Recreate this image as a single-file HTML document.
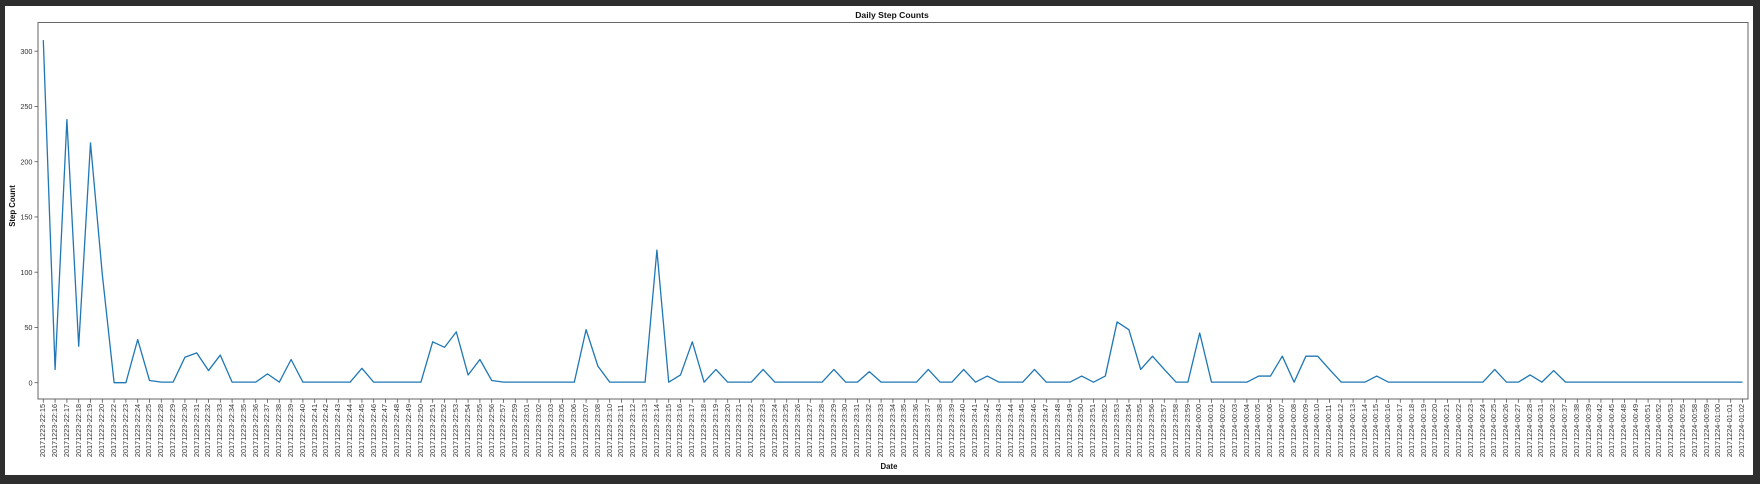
<!DOCTYPE html>
<html><head><meta charset="utf-8"><style>
html,body{margin:0;padding:0;background:#2e2e2e;width:1760px;height:484px;overflow:hidden}
#fig{position:absolute;left:5px;top:6px;width:1748px;height:469px;background:#fff}
svg{position:absolute;left:0;top:0}
#xl{position:absolute;left:37.4px;top:404px;display:flex;font:7.3px "Liberation Sans",sans-serif;color:#333}
#xl span{width:11.8px;display:flex;justify-content:center}
#xl span i{font-style:normal;writing-mode:vertical-rl;transform:rotate(180deg);white-space:nowrap;line-height:8px}
</style></head><body>
<div id="fig"></div>
<svg width="1760" height="484" xmlns="http://www.w3.org/2000/svg" font-family="Liberation Sans, sans-serif">
<rect x="38" y="22.5" width="1710" height="376.5" fill="none" stroke="#666" stroke-width="1"/>
<text x="892" y="18" font-size="8.6" font-weight="bold" text-anchor="middle" fill="#111">Daily Step Counts</text>
<text x="889" y="469" font-size="7.8" font-weight="bold" text-anchor="middle" fill="#111">Date</text>
<text transform="translate(15,206) rotate(-90)" font-size="7.8" font-weight="bold" text-anchor="middle" fill="#111">Step Count</text>
<g stroke="#555" stroke-width="0.8">
<line x1="34.5" x2="38" y1="382.7" y2="382.7"/><line x1="34.5" x2="38" y1="327.45" y2="327.45"/><line x1="34.5" x2="38" y1="272.2" y2="272.2"/><line x1="34.5" x2="38" y1="216.95" y2="216.95"/><line x1="34.5" x2="38" y1="161.7" y2="161.7"/><line x1="34.5" x2="38" y1="106.45" y2="106.45"/><line x1="34.5" x2="38" y1="51.2" y2="51.2"/>
</g>
<line x1="42.9" x2="1745" y1="401" y2="401" stroke="#555" stroke-width="3.5" stroke-dasharray="0.8 11"/>
<g font-size="7.3" fill="#333" text-anchor="end">
<text x="32.5" y="385.3">0</text><text x="32.5" y="330">50</text><text x="32.5" y="274.8">100</text><text x="32.5" y="219.5">150</text><text x="32.5" y="164.3">200</text><text x="32.5" y="109">250</text><text x="32.5" y="53.8">300</text>
</g>
<polyline transform="translate(43.3,382.7) scale(11.8,-1.105)" vector-effect="non-scaling-stroke" fill="none" stroke="#1f77b4" stroke-width="1.3" stroke-linejoin="round"
points="0,310 1,12 2,238 3,33 4,217 5,98 6,0 7,0 8,39 9,2 10,0.5 11,0.5 12,23 13,27 14,11 15,25 16,0.5 17,0.5 18,0.5 19,8 20,0.5 21,21 22,0.5 23,0.5 24,0.5 25,0.5 26,0.5 27,13 28,0.5 29,0.5 30,0.5 31,0.5 32,0.5 33,37 34,32 35,46 36,7 37,21 38,2 39,0.5 40,0.5 41,0.5 42,0.5 43,0.5 44,0.5 45,0.5 46,48 47,15 48,0.5 49,0.5 50,0.5 51,0.5 52,120 53,0.5 54,7 55,37 56,0.5 57,12 58,0.5 59,0.5 60,0.5 61,12 62,0.5 63,0.5 64,0.5 65,0.5 66,0.5 67,12 68,0.5 69,0.5 70,10 71,0.5 72,0.5 73,0.5 74,0.5 75,12 76,0.5 77,0.5 78,12 79,0.5 80,6 81,0.5 82,0.5 83,0.5 84,12 85,0.5 86,0.5 87,0.5 88,6 89,0.5 90,6 91,55 92,48 93,12 94,24 95,12 96,0.5 97,0.5 98,45 99,0.5 100,0.5 101,0.5 102,0.5 103,6 104,6 105,24 106,0.5 107,24 108,24 109,12 110,0.5 111,0.5 112,0.5 113,6 114,0.5 115,0.5 116,0.5 117,0.5 118,0.5 119,0.5 120,0.5 121,0.5 122,0.5 123,12 124,0.5 125,0.5 126,7 127,0.5 128,11 129,0.5 130,0.5 131,0.5 132,0.5 133,0.5 134,0.5 135,0.5 136,0.5 137,0.5 138,0.5 139,0.5 140,0.5 141,0.5 142,0.5 143,0.5 144,0.5"/>
</svg>
<div id="xl">
<span><i>20171223-22:15</i></span><span><i>20171223-22:16</i></span><span><i>20171223-22:17</i></span><span><i>20171223-22:18</i></span><span><i>20171223-22:19</i></span><span><i>20171223-22:20</i></span><span><i>20171223-22:22</i></span><span><i>20171223-22:23</i></span><span><i>20171223-22:24</i></span><span><i>20171223-22:25</i></span><span><i>20171223-22:28</i></span><span><i>20171223-22:29</i></span><span><i>20171223-22:30</i></span><span><i>20171223-22:31</i></span><span><i>20171223-22:32</i></span><span><i>20171223-22:33</i></span><span><i>20171223-22:34</i></span><span><i>20171223-22:35</i></span><span><i>20171223-22:36</i></span><span><i>20171223-22:37</i></span><span><i>20171223-22:38</i></span><span><i>20171223-22:39</i></span><span><i>20171223-22:40</i></span><span><i>20171223-22:41</i></span><span><i>20171223-22:42</i></span><span><i>20171223-22:43</i></span><span><i>20171223-22:44</i></span><span><i>20171223-22:45</i></span><span><i>20171223-22:46</i></span><span><i>20171223-22:47</i></span><span><i>20171223-22:48</i></span><span><i>20171223-22:49</i></span><span><i>20171223-22:50</i></span><span><i>20171223-22:51</i></span><span><i>20171223-22:52</i></span><span><i>20171223-22:53</i></span><span><i>20171223-22:54</i></span>
<span><i>20171223-22:55</i></span><span><i>20171223-22:56</i></span><span><i>20171223-22:57</i></span><span><i>20171223-22:59</i></span><span><i>20171223-23:01</i></span><span><i>20171223-23:02</i></span><span><i>20171223-23:03</i></span><span><i>20171223-23:05</i></span><span><i>20171223-23:06</i></span><span><i>20171223-23:07</i></span><span><i>20171223-23:08</i></span><span><i>20171223-23:10</i></span><span><i>20171223-23:11</i></span><span><i>20171223-23:12</i></span><span><i>20171223-23:13</i></span><span><i>20171223-23:14</i></span><span><i>20171223-23:15</i></span><span><i>20171223-23:16</i></span><span><i>20171223-23:17</i></span><span><i>20171223-23:18</i></span><span><i>20171223-23:19</i></span><span><i>20171223-23:20</i></span><span><i>20171223-23:21</i></span><span><i>20171223-23:22</i></span><span><i>20171223-23:23</i></span><span><i>20171223-23:24</i></span><span><i>20171223-23:25</i></span><span><i>20171223-23:26</i></span><span><i>20171223-23:27</i></span><span><i>20171223-23:28</i></span><span><i>20171223-23:29</i></span><span><i>20171223-23:30</i></span><span><i>20171223-23:31</i></span><span><i>20171223-23:32</i></span><span><i>20171223-23:33</i></span><span><i>20171223-23:34</i></span>
<span><i>20171223-23:35</i></span><span><i>20171223-23:36</i></span><span><i>20171223-23:37</i></span><span><i>20171223-23:38</i></span><span><i>20171223-23:39</i></span><span><i>20171223-23:40</i></span><span><i>20171223-23:41</i></span><span><i>20171223-23:42</i></span><span><i>20171223-23:43</i></span><span><i>20171223-23:44</i></span><span><i>20171223-23:45</i></span><span><i>20171223-23:46</i></span><span><i>20171223-23:47</i></span><span><i>20171223-23:48</i></span><span><i>20171223-23:49</i></span><span><i>20171223-23:50</i></span><span><i>20171223-23:51</i></span><span><i>20171223-23:52</i></span><span><i>20171223-23:53</i></span><span><i>20171223-23:54</i></span><span><i>20171223-23:55</i></span><span><i>20171223-23:56</i></span><span><i>20171223-23:57</i></span><span><i>20171223-23:58</i></span><span><i>20171223-23:59</i></span><span><i>20171224-00:00</i></span><span><i>20171224-00:01</i></span><span><i>20171224-00:02</i></span><span><i>20171224-00:03</i></span><span><i>20171224-00:04</i></span><span><i>20171224-00:05</i></span><span><i>20171224-00:06</i></span><span><i>20171224-00:07</i></span><span><i>20171224-00:08</i></span><span><i>20171224-00:09</i></span><span><i>20171224-00:10</i></span><span><i>20171224-00:11</i></span>
<span><i>20171224-00:12</i></span><span><i>20171224-00:13</i></span><span><i>20171224-00:14</i></span><span><i>20171224-00:15</i></span><span><i>20171224-00:16</i></span><span><i>20171224-00:17</i></span><span><i>20171224-00:18</i></span><span><i>20171224-00:19</i></span><span><i>20171224-00:20</i></span><span><i>20171224-00:21</i></span><span><i>20171224-00:22</i></span><span><i>20171224-00:23</i></span><span><i>20171224-00:24</i></span><span><i>20171224-00:25</i></span><span><i>20171224-00:26</i></span><span><i>20171224-00:27</i></span><span><i>20171224-00:28</i></span><span><i>20171224-00:31</i></span><span><i>20171224-00:32</i></span><span><i>20171224-00:37</i></span><span><i>20171224-00:38</i></span><span><i>20171224-00:39</i></span><span><i>20171224-00:42</i></span><span><i>20171224-00:45</i></span><span><i>20171224-00:48</i></span><span><i>20171224-00:49</i></span><span><i>20171224-00:51</i></span><span><i>20171224-00:52</i></span><span><i>20171224-00:53</i></span><span><i>20171224-00:55</i></span><span><i>20171224-00:58</i></span><span><i>20171224-00:59</i></span><span><i>20171224-01:00</i></span><span><i>20171224-01:01</i></span><span><i>20171224-01:02</i></span>
</div>
</body></html>
